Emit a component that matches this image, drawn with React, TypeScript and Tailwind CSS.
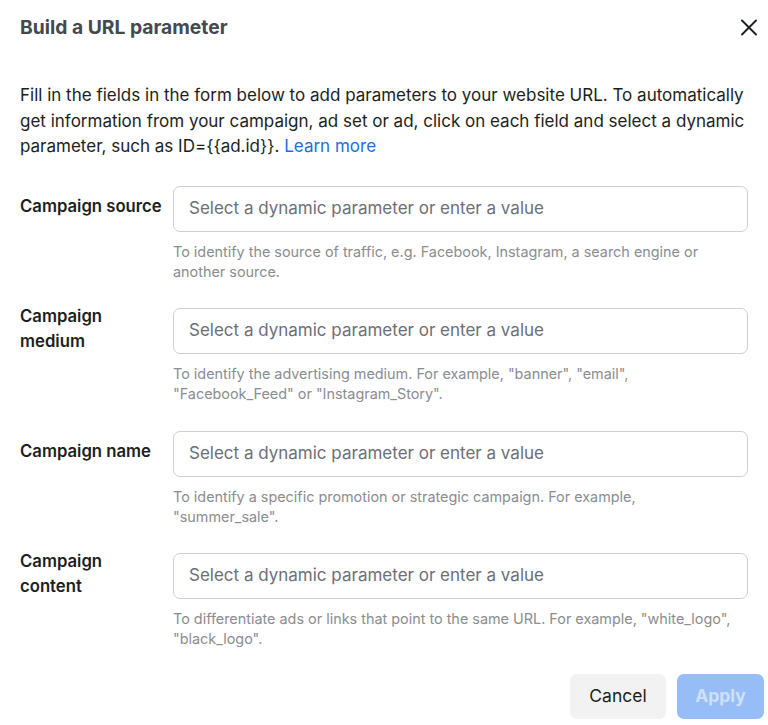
import React from "react";

const fields = [
  {
    label: ["Campaign source"],
    help: ["To identify the source of traffic, e.g. Facebook, Instagram, a search engine or", "another source."],
  },
  {
    label: ["Campaign", "medium"],
    help: ['To identify the advertising medium. For example, "banner", "email",', '"Facebook_Feed" or "Instagram_Story".'],
  },
  {
    label: ["Campaign name"],
    help: ["To identify a specific promotion or strategic campaign. For example,", '"summer_sale".'],
  },
  {
    label: ["Campaign", "content"],
    help: ['To differentiate ads or links that point to the same URL. For example, "white_logo",', '"black_logo".'],
  },
];

export default function App() {
  return (
    <div
      className="w-[768px] h-[725px] bg-white overflow-hidden text-[#1c1e21]"
      style={{ fontFamily: 'Inter, "Liberation Sans", Arial, sans-serif' }}
    >
      <div className="flex items-start justify-between pl-[20px] pr-[11px] pt-[15px]">
        <h1 className="text-[19.3px] leading-[25px] font-bold text-[#444950]">Build a URL parameter</h1>
        <button className="mt-[4px] w-[16px] h-[17px] flex items-center justify-center" aria-label="Close">
          <svg width="16" height="17" viewBox="0 0 16 17" fill="none">
            <path d="M1 1.5 L15 15.5 M15 1.5 L1 15.5" stroke="#1c1e21" strokeWidth="1.9" strokeLinecap="round" />
          </svg>
        </button>
      </div>

      <p className="mt-[43px] px-[20px] text-[17px] leading-[25.5px]">
        <span className="block whitespace-nowrap">
          Fill in the fields in the form below to add parameters to your website URL. To automatically
        </span>
        <span className="block whitespace-nowrap">
          get information from your campaign, ad set or ad, click on each field and select a dynamic
        </span>
        <span className="block whitespace-nowrap">
          parameter, such as ID={"{{ad.id}}"}. <span className="text-[#216fdb]">Learn more</span>
        </span>
      </p>

      <div className="mt-[26px] pl-[20px] pr-[20px] flex flex-col gap-[26.5px]">
        {fields.map((f, i) => (
          <div key={i} className="grid grid-cols-[153px_1fr]">
            <div className="flex items-center h-[46px]">
              <div className="text-[16.7px] leading-[25px] font-semibold -mt-[5px]">
                {f.label.map((l, j) => (
                  <div key={j} className="whitespace-nowrap">{l}</div>
                ))}
              </div>
            </div>
            <div>
              <div className="h-[46px] rounded-[7px] border border-[#ccd0d5] flex items-center px-[15px]">
                <span className="text-[17px] text-[#6b6f76] whitespace-nowrap">
                  Select a dynamic parameter or enter a value
                </span>
              </div>
              <div className="mt-[10px] text-[14.4px] leading-[20px] text-[#8a8d91]">
                {f.help.map((h, j) => (
                  <div key={j} className="whitespace-nowrap">{h}</div>
                ))}
              </div>
            </div>
          </div>
        ))}
      </div>

      <div className="mt-[25px] flex justify-end gap-[11px] pr-[4px]">
        <button className="h-[45px] w-[96px] rounded-[7px] bg-[#f2f2f2] text-[17.5px] text-[#1c1e21]">Cancel</button>
        <button className="h-[45px] w-[87px] rounded-[7px] bg-[#97bdf7] text-[17.5px] font-bold text-[#cfe0fb]">Apply</button>
      </div>
    </div>
  );
}
